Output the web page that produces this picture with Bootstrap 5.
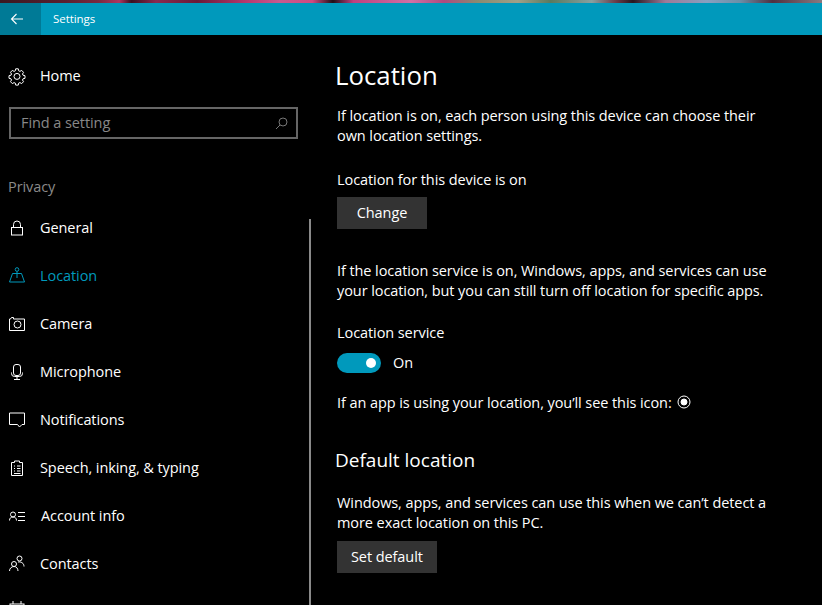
<!doctype html>
<html><head><meta charset="utf-8">
<link href="https://cdn.jsdelivr.net/npm/bootstrap@5.3.0/dist/css/bootstrap.min.css" rel="stylesheet">
<style>
html,body{height:605px;overflow:hidden;background:#000}
body{font-family:"Open Sans","Noto Sans",sans-serif;color:#fff;font-size:14.5px;line-height:20px;letter-spacing:-.08px}
.strip{height:3px;background:linear-gradient(90deg,#3a1820 0,#5a2030 8%,#7a2a40 12%,#b0355f 14.5%,#3a1020 16%,#8a2a50 19%,#6a1a38 24%,#b8386f 30%,#c85a90 34%,#d04a80 38%,#201018 40.500%,#c0407f 43%,#d070a5 50%,#b04a7f 54%,#8a8a70 58%,#a0a088 63%,#5a7a60 67%,#88a0a0 72%,#6a3a48 75%,#281820 77%,#a07a98 81%,#88a0c0 86%,#6a90a8 90%,#503040 94%,#8a7a80 100%)}
.titlebar{height:32px;background:#0099bc}
.backbtn{width:41px;background:#007a96;padding-left:10px}
.apptitle{font-size:11.5px;margin-left:12px;letter-spacing:-.05px}
.sidecol{width:309px;height:570px;overflow:hidden}
.homerow{height:20px;margin-top:31px;padding-left:9px}
.ico{width:16px;height:16px;flex:none;fill:none;stroke:#fff;stroke-width:1;overflow:visible}
.navlabel{margin-left:15px}
.findbox{width:289px;height:32px;margin:21px 0 0 9px;border:2px solid #666;color:#888;padding:0 8px 0 10px}
.privacy{color:#8a8a8a;margin:38px 0 0 8px;height:20px}
.navlist{margin-top:7px}
.navrow{height:48px;padding-left:9px}
.navrow.active{color:#0099bc}
.navrow.active .ico{stroke:#0099bc}
.navrow.cut{padding-bottom:6px}
.scrolltrack{width:2px;height:386px;background:#8a8a8a;margin-top:184px;flex:none}
.maincol{padding-left:24px}
.pagetitle{font-size:25.800px;line-height:32px;margin:24px 0 0 0;font-weight:400;letter-spacing:0}
.txt{width:440px;margin:0 0 0 2px}
.winbtn{background:#333;color:#fff;border:0;border-radius:0;height:32px;min-width:90px;font-size:14.5px;padding:0 14px;margin-left:2px;letter-spacing:-.08px}
.winbtn:hover{background:#333;color:#fff}
.togglerow{margin-left:2px}
.pill{width:44px;height:20px;border-radius:10px;background:#0099bc;flex:none;padding-right:5px}
.knob{width:10px;height:10px;border-radius:50%;background:#fff}
.onlabel{margin-left:12px}
.subhead{font-size:19px;line-height:24px;font-weight:400;margin:35px 0 0 0;letter-spacing:0}
.g15{margin-top:15px}.g24{margin-top:24px}.g7{margin-top:7px}.g32{margin-top:32px}.g22{margin-top:22px}.g10{margin-top:10px}.g20{margin-top:20px}.g21{margin-top:21px}.g8{margin-top:8px}
.dot{margin-left:5px;margin-top:-3px;flex:none}
</style></head><body>
<div class="strip"></div>
<div class="titlebar d-flex align-items-stretch">
<div class="backbtn d-flex align-items-center"><svg width="14" height="12" viewBox="0 0 14 12" fill="none" stroke="#fff" stroke-width="1.1"><path d="M13 6H1.500M6.500 1 1.500 6l5 5"/></svg></div>
<div class="apptitle d-flex align-items-center">Settings</div>
</div>
<div class="d-flex">
<div class="sidecol">
<div class="homerow d-flex align-items-center"><svg class="ico" viewBox="0 0 16 16"><path d="M6.700.8h2.600l.4 2 1.200.6 1.800-1 1.800 1.900-1 1.700.5 1.200 2 .5v2.600l-2 .5-.5 1.200 1 1.700-1.800 1.900-1.800-1-1.200.5-.4 2H6.700l-.4-2-1.200-.5-1.800 1-1.800-1.900 1-1.700-.5-1.200-2-.5V7.700l2-.5.5-1.200-1-1.700 1.800-1.900 1.800 1 1.200-.6z"/><circle cx="8" cy="8.400" r="3"/></svg><span class="navlabel">Home</span></div>
<div class="findbox d-flex align-items-center justify-content-between"><span>Find a setting</span><svg width="13" height="13" viewBox="0 0 13 13" fill="none" stroke="#777"><circle cx="8" cy="5" r="4"/><path d="M5 8 1 12"/></svg></div>
<div class="privacy">Privacy</div>
<div class="navlist">
<div class="navrow d-flex align-items-center"><svg class="ico" viewBox="0 0 16 16"><rect x="2.500" y="7.500" width="11" height="7.500"/><path d="M4.500 7.500V4.500a3.500 3.500 0 0 1 7 0v3"/></svg><span class="navlabel">General</span></div>
<div class="navrow active d-flex align-items-center"><svg class="ico" viewBox="0 0 16 16"><circle cx="8" cy="1.500" r="1.800"/><path d="M8 3.300V10M3.500 5.500h9L15.500 14H.5z"/></svg><span class="navlabel">Location</span></div>
<div class="navrow d-flex align-items-center"><svg class="ico" viewBox="0 0 16 16"><path d="M.5 3h1l1-1.500h2V3h11v11.500H.5z"/><circle cx="8.500" cy="8.500" r="3.500"/></svg><span class="navlabel">Camera</span></div>
<div class="navrow d-flex align-items-center"><svg class="ico" viewBox="0 0 16 16"><rect x="4.500" y=".5" width="7" height="11" rx="2.500"/><path d="M2.500 8.500v1a3 3 0 0 0 3 3h5a3 3 0 0 0 3-3v-1M8 12.500v2.500M5 15.500h6"/></svg><span class="navlabel">Microphone</span></div>
<div class="navrow d-flex align-items-center"><svg class="ico" viewBox="0 0 16 16"><path d="M.5 1h15v11.500H13L10.500 15l-2-2.500H.5z"/></svg><span class="navlabel">Notifications</span></div>
<div class="navrow d-flex align-items-center"><svg class="ico" viewBox="0 0 16 16"><path d="M2.500 2.500h3V1h5v1.500h3v13h-11zM5 6h1M8 6h3.500M5 8.500h1M8 8.500h3.500M5 11h1M8 11h3.500M5 13.500h6.500"/></svg><span class="navlabel">Speech, inking, &amp; typing</span></div>
<div class="navrow d-flex align-items-center"><svg class="ico" viewBox="0 0 16 16"><circle cx="4" cy="6.500" r="2.500"/><path d="M.5 12.500c0-2.500 1.500-3.500 3.500-3.500s3.500 1 3.500 3.500M9 4.500h7M9 8.500h7M9 12.500h7"/></svg><span class="navlabel ms-3">Account info</span></div>
<div class="navrow d-flex align-items-center"><svg class="ico" viewBox="0 0 16 16"><circle cx="5" cy="8" r="2.500"/><circle cx="10.500" cy="2.500" r="2.500"/><path d="M.5 15c0-2.500 2-4.500 4.500-4.500S9 12.500 9 15M9 6c3-.5 6 1 6 4.500"/></svg><span class="navlabel">Contacts</span></div>
<div class="navrow cut d-flex align-items-center"><svg class="ico" viewBox="0 0 16 16"><rect x="1" y="3" width="14" height="12"/><path d="M4 0v3M12 0v3"/></svg></div>
</div>
</div>
<div class="scrolltrack"></div>
<div class="maincol flex-grow-1">
<h1 class="pagetitle">Location</h1>
<p class="txt g15">If location is on, each person using this device can choose their own location settings.</p>
<p class="txt g24">Location for this device is on</p>
<button class="btn winbtn d-block g7">Change</button>
<p class="txt g32">If the location service is on, Windows, apps, and services can use your location, but you can still turn off location for specific apps.</p>
<p class="txt g22">Location service</p>
<div class="togglerow d-flex align-items-center g10"><div class="pill d-flex align-items-center justify-content-end"><div class="knob"></div></div><span class="onlabel">On</span></div>
<p class="txt d-flex align-items-center g20">If an app is using your location, you’ll see this icon:<svg class="dot" width="14" height="14" viewBox="0 0 14 14" fill="none" stroke="#fff"><circle cx="7" cy="7" r="6"/><circle cx="7" cy="7" r="3" fill="#fff"/></svg></p>
<h2 class="subhead">Default location</h2>
<p class="txt g21">Windows, apps, and services can use this when we can’t detect a more exact location on this PC.</p>
<button class="btn winbtn d-block g8">Set default</button>
</div>
</div>
</body></html>
